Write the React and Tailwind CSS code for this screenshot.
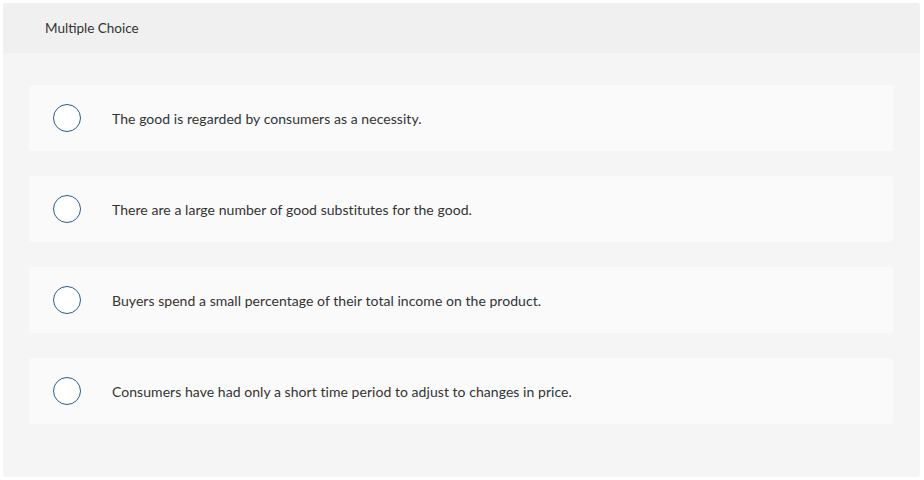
import React from 'react';

const choices = [
  'The good is regarded by consumers as a necessity.',
  'There are a large number of good substitutes for the good.',
  'Buyers spend a small percentage of their total income on the product.',
  'Consumers have had only a short time period to adjust to changes in price.',
];

export default function App() {
  return (
    <div className="min-h-screen bg-white p-[3px] pr-[4px]" style={{ fontFamily: 'Lato, "Open Sans", sans-serif' }}>
      <div className="w-[917px] rounded-[3px] bg-[#f5f5f5] overflow-hidden">
        {/* Header */}
        <div className="h-[50px] bg-[#f0f0f0] flex items-center pl-[42px] pt-[1px]">
          <span className="text-[13.5px] text-[#333]">Multiple Choice</span>
        </div>

        {/* Choices */}
        <div className="pt-[32px] pb-[53px] pl-[26px] pr-[27px] flex flex-col gap-[25px]">
          {choices.map((c) => (
            <div key={c} className="h-[66px] rounded-[3px] bg-[#fafafa] flex items-center pl-[24px]">
              <span className="w-[28px] h-[28px] rounded-full border border-[#2a5d8c] bg-white shrink-0" />
              <span className="ml-[31px] text-[14px] tracking-[0.05px] text-[#333]">{c}</span>
            </div>
          ))}
        </div>
      </div>
    </div>
  );
}
